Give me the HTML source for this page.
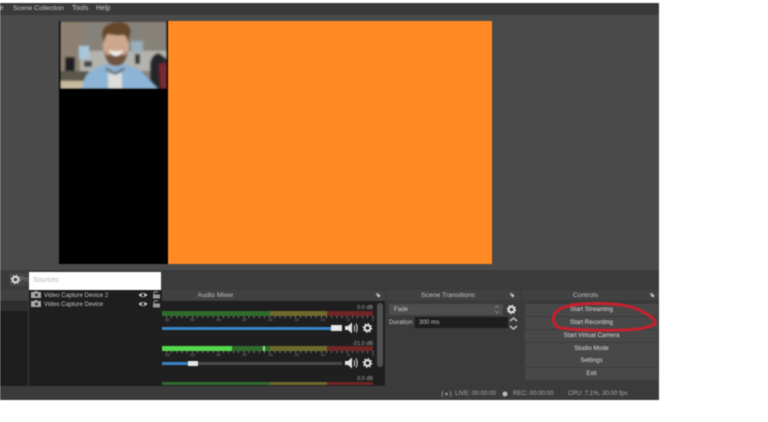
<!DOCTYPE html>
<html><head><meta charset="utf-8"><style>
html,body{margin:0;padding:0;background:#fff}
#r{position:relative;width:768px;height:422px;overflow:hidden;background:#fff;font-family:"Liberation Sans",sans-serif;filter:blur(.5px)}
#r div{position:absolute;box-sizing:border-box;white-space:nowrap}
.t{color:#c8c8c8;font-size:6.5px;line-height:10px}
.b{background:#484848;color:#dcdcdc;font-size:6.2px;line-height:12px;text-align:center;left:525px;width:133px;height:12px}
.h{background:#414141;height:10px;top:290px}
.ht{color:#c0c0c0;font-size:6.8px;line-height:10px;text-align:center;top:291px;height:10px}
.m{height:2px;top:0;background:repeating-linear-gradient(90deg,#777 0 1px,transparent 1px 5.16px)}
.n{font-size:3.6px;color:#888;line-height:4px;width:14px;text-align:center}
</style></head><body><div id="r">
<div style="left:0;top:3px;width:659px;height:397px;background:#4a4a4a"></div>
<div style="left:0;top:3px;width:659px;height:12px;background:#3a3a3a"></div>
<div class="t" style="left:-2px;top:4px;font-size:7px">le</div>
<div class="t" style="left:13px;top:4px;font-size:6.800px">Scene Collection</div>
<div class="t" style="left:72px;top:4px;font-size:7px">Tools</div>
<div class="t" style="left:96px;top:4px;font-size:7px">Help</div>
<div style="left:0;top:270px;width:659px;height:130px;background:#3b3b3b"></div>
<div style="left:59px;top:21px;width:109px;height:243px;background:#000"></div>
<div style="left:168px;top:21px;width:324px;height:243px;background:#ff8a24"></div>
<svg style="position:absolute;left:60px;top:21px" width="107" height="68" viewBox="0 0 107 68">
<defs><filter id="f"><feGaussianBlur stdDeviation="1"/></filter></defs>
<g filter="url(#f)">
<rect width="107" height="68" fill="#86827a"/>
<rect width="23" height="48" fill="#8c8070"/>
<rect y="30" x="20" width="87" height="20" fill="#b4b3ae"/>
<rect x="19" y="25" width="10" height="13" fill="#a8c8dc"/>
<rect x="5" y="36" width="10" height="15" fill="#1c1e24"/>
<rect x="24" y="40" width="8" height="6" fill="#444"/>
<rect y="50" width="28" height="18" fill="#5c564c"/>
<rect y="60" width="24" height="8" fill="#c8bca0"/>
<rect x="71" y="20" width="12" height="11" fill="#98aeb8"/>
<rect x="75" y="33" width="5" height="10" fill="#33353a"/>
<path d="M90 68V42q2-9 9-10l8 6v30z" fill="#26252a"/>
<path d="M99 44l8-3v27h-6z" fill="#7c2a30"/>
<path d="M22 68q2-16 12-20l12-5 9 3 9-3 14 5q8 7 20 20z" fill="#8cb4d6" transform="translate(0 0)"/>
<path d="M48 68V52l7 2 7-2v16z" fill="#dcdcd8"/>
<path d="M46 46l9 5 9-5 1 3-10 5-10-5z" fill="#6e7a80"/>
<ellipse cx="56" cy="24" rx="13" ry="20" fill="#cda88f"/>
<path d="M44 28q1 17 12 17t12-17q-1 6-4 6-8-2-16 0-3 0-4-6z" fill="#705240"/>
<path d="M49 29q7 3 14 0-2 6-7 6t-7-6z" fill="#f4f0ea"/>
<path d="M44 22q-5-13 3-18 10-5 18-2 8 5 5 12l-2 8q-1-7-4-8-9 1-16-1-3 2-4 9z" fill="#654629"/>
</g></svg>
<div style="left:10px;top:273px;width:1px;height:13px;background:#555"></div>
<div style="left:11px;top:273px;width:17px;height:13px;background:#444"></div>
<div class="t" style="left:20px;top:275px;color:#888">Pro</div>
<svg style="position:absolute;left:10px;top:274px" width="11" height="11" viewBox="0 0 11 11"><circle cx="5.500" cy="5.500" r="2.800" fill="none" stroke="#d8d8d8" stroke-width="2"/><circle cx="5.500" cy="5.500" r="4" fill="none" stroke="#d8d8d8" stroke-width="1.500" stroke-dasharray="1.500 1.640"/></svg>
<div class="h" style="left:0;width:28px"></div>
<div style="left:0;top:301px;width:28px;height:85px;background:#1e1e1e"></div>
<div style="left:0;top:301px;width:28px;height:10px;background:#2e2e2e"></div>
<div style="left:28px;top:290px;width:134px;height:96px;background:#1e1e1e;border-left:1px solid #3c3c3c"></div>
<div style="left:29px;top:272px;width:132px;height:18px;background:#fff;color:#b4b4b4;font-size:7px;line-height:18px;padding-left:4px">Sources</div>
<svg style="position:absolute;left:31px;top:290px" width="10" height="18" viewBox="0 0 10 18"><g id="c"><path d="M0 2h3l1-1h2l1 1h3v6H0z" fill="#a8a8a8"/><circle cx="5.500" cy="5" r="1.500" fill="#333"/></g><use href="#c" y="9"/></svg>
<div class="t" style="left:44px;top:291px;color:#c4c4c4;font-size:6.100px">Video Capture Device 2</div>
<div class="t" style="left:44px;top:300px;color:#c4c4c4;font-size:6.100px">Video Capture Device</div>
<svg style="position:absolute;left:138px;top:290px" width="24" height="18" viewBox="0 0 24 18"><g id="e"><path d="M.500 5q4.500-4 9 0-4.500 4-9 0z" fill="#d4d4d4"/><circle cx="5" cy="5" r="1.500" fill="#222"/><rect x="15" y="4.500" width="7" height="4" fill="#9a9a9a"/><path d="M16 4.500V2.500q2-2 4 0" fill="none" stroke="#9a9a9a"/></g><use href="#e" y="9"/></svg>
<div class="h" style="left:162px;width:223px"></div>
<div class="ht" style="left:162px;width:107px">Audio Mixer</div>
<div style="left:162px;top:301px;width:223px;height:85px;background:#1f1f1f"></div>
<div style="left:377px;top:303px;width:6px;height:64px;background:#505050;border-radius:3px"></div>
<div class="t" style="right:395px;top:303px;font-size:5.500px;color:#aaa">0.0 dB</div>
<div style="left:162px;top:311px;width:108px;height:5px;background:#2f6b2c"></div>
<div style="left:270px;top:311px;width:57px;height:5px;background:#6e6a2c"></div>
<div style="left:327px;top:311px;width:46px;height:5px;background:#6e2626"></div>
<div class="m" style="left:166px;top:316px;width:208px"></div>
<div class="n" style="left:160px;top:318px">-60</div><div class="n" style="left:185px;top:318px">-50</div><div class="n" style="left:211px;top:318px">-40</div><div class="n" style="left:237px;top:318px">-30</div><div class="n" style="left:263px;top:318px">-20</div><div class="n" style="left:289px;top:318px">-15</div><div class="n" style="left:315px;top:318px">-10</div><div class="n" style="left:341px;top:318px">-5</div><div class="n" style="left:366px;top:318px">0</div>
<div style="left:162px;top:327px;width:170px;height:3px;background:#3a82c8"></div>
<div style="left:331px;top:325px;width:11px;height:6px;background:#e6e6e6"></div>
<div class="t" style="right:395px;top:339px;font-size:5.500px;color:#aaa">-21.0 dB</div>
<div style="left:162px;top:346px;width:70px;height:5px;background:#54d84c"></div>
<div style="left:232px;top:346px;width:38px;height:5px;background:#2f6b2c"></div>
<div style="left:263px;top:346px;width:2px;height:5px;background:#8fe88a"></div>
<div style="left:270px;top:346px;width:57px;height:5px;background:#6e6a2c"></div>
<div style="left:327px;top:346px;width:46px;height:5px;background:#6e2626"></div>
<div class="m" style="left:166px;top:351px;width:208px"></div>
<div class="n" style="left:160px;top:353px">-60</div><div class="n" style="left:185px;top:353px">-50</div><div class="n" style="left:211px;top:353px">-40</div><div class="n" style="left:237px;top:353px">-30</div><div class="n" style="left:263px;top:353px">-20</div><div class="n" style="left:289px;top:353px">-15</div><div class="n" style="left:315px;top:353px">-10</div><div class="n" style="left:341px;top:353px">-5</div><div class="n" style="left:366px;top:353px">0</div>
<div style="left:162px;top:362px;width:180px;height:3px;background:#4a4a4a"></div>
<div style="left:162px;top:362px;width:26px;height:3px;background:#3a82c8"></div>
<div style="left:188px;top:361px;width:10px;height:5px;background:#e6e6e6"></div>
<div class="t" style="right:395px;top:374px;font-size:5.500px;color:#aaa">0.0 dB</div>
<div style="left:162px;top:382px;width:108px;height:3px;background:#2f6b2c"></div>
<div style="left:270px;top:382px;width:57px;height:3px;background:#6e6a2c"></div>
<div style="left:327px;top:382px;width:46px;height:3px;background:#6e2626"></div>
<svg style="position:absolute;left:344px;top:321px" width="30" height="50" viewBox="0 0 30 50"><g id="s"><path d="M1 5h3l4-3.500v11L4 9H1z" fill="#e2e2e2"/><path d="M10 4.500q1.500 3 0 5.500M12 2.500q2.500 5 0 9" fill="none" stroke="#e2e2e2"/><circle cx="23.500" cy="7" r="2.800" fill="none" stroke="#e2e2e2" stroke-width="2"/><circle cx="23.500" cy="7" r="4.100" fill="none" stroke="#e2e2e2" stroke-width="1.500" stroke-dasharray="1.500 1.720"/></g><use href="#s" y="35"/></svg>
<div class="h" style="left:387px;width:133px"></div>
<div class="ht" style="left:386px;width:124px">Scene Transitions</div>
<div style="left:389px;top:304px;width:114px;height:11px;background:#4e4e4e;color:#c8c8c8;font-size:6.200px;line-height:12px;padding-left:5px">Fade</div>
<svg style="position:absolute;left:493px;top:305px" width="8" height="9" viewBox="0 0 8 9"><path d="M2 3l2-2 2 2M2 6l2 2 2-2" fill="none" stroke="#888" stroke-width=".8"/></svg>
<svg style="position:absolute;left:506px;top:304px" width="11" height="11" viewBox="0 0 11 11"><circle cx="5.500" cy="5.500" r="2.800" fill="none" stroke="#e2e2e2" stroke-width="2"/><circle cx="5.500" cy="5.500" r="4" fill="none" stroke="#e2e2e2" stroke-width="1.500" stroke-dasharray="1.500 1.640"/></svg>
<div class="t" style="left:389px;top:318px;font-size:6.200px">Duration</div>
<div style="left:415px;top:317px;width:93px;height:11px;background:#1d1d1d;color:#c8c8c8;font-size:6.200px;line-height:12px;padding-left:4px">300 ms</div>
<svg style="position:absolute;left:509px;top:317px" width="9" height="13" viewBox="0 0 9 13"><path d="M1 4l3.500-3L8 4M1 9l3.500 3L8 9" fill="none" stroke="#bbb" stroke-width="1.500"/></svg>
<div class="h" style="left:522px;width:137px"></div>
<div class="ht" style="left:522px;width:127px">Controls</div>
<svg style="position:absolute;left:376px;top:293px" width="280" height="5" viewBox="0 0 280 5"><g id="u" fill="#999"><rect width="2.500" height="2.500"/><rect x="1.500" y="1.500" width="2.500" height="2.500" fill="#ccc"/></g><use href="#u" x="134"/><use href="#u" x="274"/></svg>
<div class="b" style="top:304px">Start Streaming</div>
<div class="b" style="top:317px">Start Recording</div>
<div class="b" style="top:330px">Start Virtual Camera</div>
<div class="b" style="top:343px">Studio Mode</div>
<div class="b" style="top:355px">Settings</div>
<div class="b" style="top:368px">Exit</div>
<svg style="position:absolute;left:550px;top:300px" width="110" height="36" viewBox="0 0 110 36"><path d="M34 4Q12 5 5 13 0 23 10 28q24 3 60 2 24 0 35-6 1-5-10-11Q85 7 72 5 50 2 20 5" fill="none" stroke="#c4222e" stroke-width="3" stroke-linejoin="round"/></svg>
<svg style="position:absolute;left:441px;top:390px" width="70" height="8" viewBox="0 0 70 8"><path d="M2 1q-2 3 0 6M9 1q2 3 0 6" fill="none" stroke="#888"/><circle cx="5.500" cy="4" r="1.500" fill="#888"/><circle cx="64" cy="4" r="2.500" fill="#bbb"/></svg>
<div class="t" style="left:455px;top:389px;color:#aaa;font-size:6.200px">LIVE: 00:00:00</div>
<div class="t" style="left:513px;top:389px;color:#aaa;font-size:6.200px">REC: 00:00:00</div>
<div class="t" style="left:568px;top:389px;color:#aaa;font-size:6.200px">CPU: 7.1%, 30.00 fps</div>
</div></body></html>
